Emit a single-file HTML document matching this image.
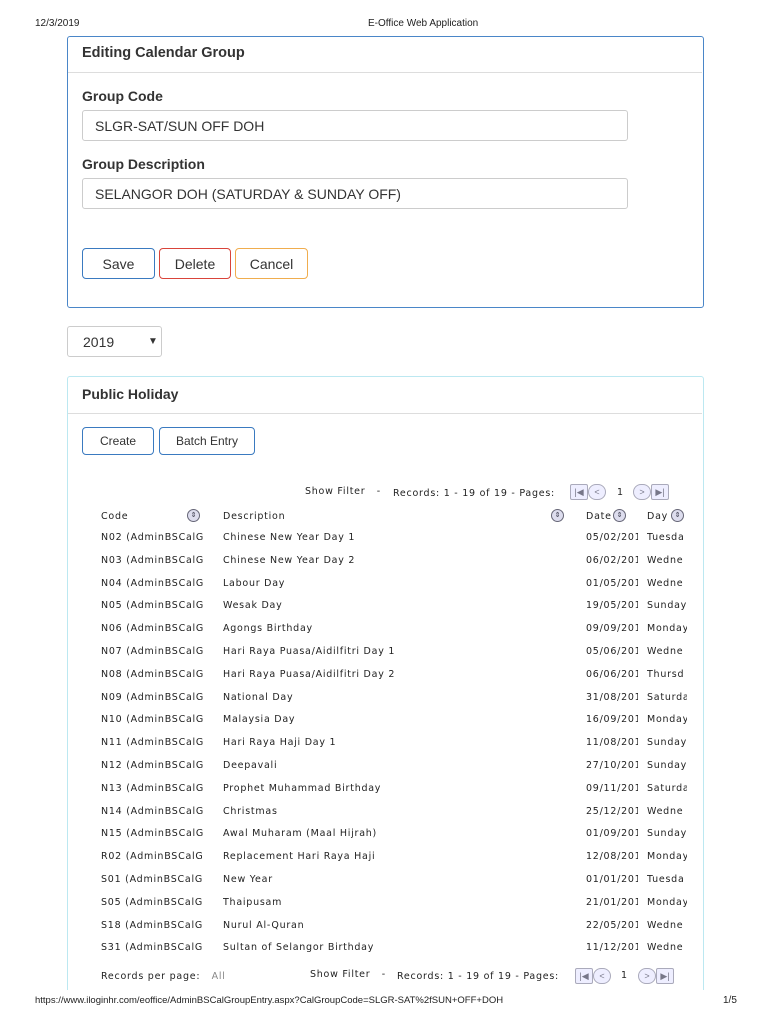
<!DOCTYPE html>
<html style="overflow:hidden"><head><style>
html,body{overflow:hidden}
body{margin:0;width:768px;height:1024px;background:#fff;font-family:"Liberation Sans",sans-serif;position:relative;color:#222}
.a{position:absolute}
.hdr{font-size:10px;color:#222}
.panel{position:absolute;border:1px solid #4a86c8;border-radius:3px}
.lbl{font-size:14px;font-weight:bold;color:#333}
.inp{position:absolute;border:1px solid #ccc;border-radius:3px;font-size:14px;padding-left:12px;box-sizing:border-box;line-height:30px;color:#333}
.btn{position:absolute;border:1px solid;border-radius:4px;font-size:14px;text-align:center;box-sizing:border-box;line-height:30px;color:#333;background:#fff}
.t{position:absolute;font-family:"DejaVu Sans",sans-serif;font-size:9.5px;letter-spacing:0.75px;color:#222;white-space:nowrap;overflow:hidden}
.s{position:absolute;width:13px;height:13px;border-radius:50%;border:1px solid #667;background:#dde;box-sizing:border-box;font-size:7px;line-height:11px;text-align:center;color:#334}
.pg{position:absolute;width:18px;height:16px;border:1px solid #aab;border-radius:8px;background:#eef;box-sizing:border-box;font-size:9px;line-height:14px;text-align:center;color:#778}
</style></head><body>
<div class="a hdr" style="left:35px;top:18px">12/3/2019</div>
<div class="a hdr" style="left:368px;top:18px">E-Office Web Application</div>

<div class="panel" style="left:67px;top:36px;width:635px;height:270px"></div>
<div class="a" style="left:68px;top:72px;width:634px;border-top:1px solid #ddd"></div>
<div class="a lbl" style="left:82px;top:45px;font-size:14.5px">Editing Calendar Group</div>
<div class="a lbl" style="left:82px;top:88px">Group Code</div>
<div class="inp" style="left:82px;top:110px;width:546px;height:31px">SLGR-SAT/SUN OFF DOH</div>
<div class="a lbl" style="left:82px;top:156px">Group Description</div>
<div class="inp" style="left:82px;top:178px;width:546px;height:31px">SELANGOR DOH (SATURDAY &amp; SUNDAY OFF)</div>
<div class="btn" style="left:82px;top:248px;width:73px;height:31px;border-color:#3a7ac0">Save</div>
<div class="btn" style="left:159px;top:248px;width:72px;height:31px;border-color:#d9443a">Delete</div>
<div class="btn" style="left:235px;top:248px;width:73px;height:31px;border-color:#f0ad4e">Cancel</div>

<div class="inp" style="left:67px;top:326px;width:95px;height:31px;padding-left:15px">2019<span style="position:absolute;left:80px;font-size:10px">▼</span></div>

<div class="panel" style="left:67px;top:376px;width:635px;height:660px;border-color:#bce8f1"></div>
<div class="a" style="left:68px;top:413px;width:634px;border-top:1px solid #ddd"></div>
<div class="a lbl" style="left:82px;top:386px">Public Holiday</div>
<div class="btn" style="left:82px;top:427px;width:72px;height:28px;line-height:26px;font-size:12px;border-color:#3a7ac0">Create</div>
<div class="btn" style="left:159px;top:427px;width:96px;height:28px;line-height:26px;font-size:12px;border-color:#3a7ac0">Batch Entry</div>

<div class="t" style="left:305px;top:486px">Show Filter &nbsp; -</div>
<div class="t" style="left:393px;top:488px">Records: 1 - 19 of 19 - Pages:</div>
<div class="pg" style="left:570px;top:484px;border-radius:2px">|◀</div><div class="pg" style="left:588px;top:484px">&lt;</div>
<div class="t" style="left:617px;top:487px">1</div>
<div class="pg" style="left:633px;top:484px">&gt;</div><div class="pg" style="left:651px;top:484px;border-radius:2px">▶|</div>

<div class="t" style="left:101px;top:511px">Code</div><div class="s" style="left:187px;top:509px">⇕</div>
<div class="t" style="left:223px;top:511px">Description</div><div class="s" style="left:551px;top:509px">⇕</div>
<div class="t" style="left:586px;top:511px">Date</div><div class="s" style="left:613px;top:509px">⇕</div>
<div class="t" style="left:647px;top:511px">Day</div><div class="s" style="left:671px;top:509px">⇕</div>

<div id="rows"></div>
<script>
var r=[["N02","Chinese New Year Day 1","05/02/","Tuesda"],["N03","Chinese New Year Day 2","06/02/","Wedne"],["N04","Labour Day","01/05/","Wedne"],["N05","Wesak Day","19/05/","Sunday"],["N06","Agongs Birthday","09/09/","Monday"],["N07","Hari Raya Puasa/Aidilfitri Day 1","05/06/","Wedne"],["N08","Hari Raya Puasa/Aidilfitri Day 2","06/06/","Thursd"],["N09","National Day","31/08/","Saturda"],["N10","Malaysia Day","16/09/","Monday"],["N11","Hari Raya Haji Day 1","11/08/","Sunday"],["N12","Deepavali","27/10/","Sunday"],["N13","Prophet Muhammad Birthday","09/11/","Saturda"],["N14","Christmas","25/12/","Wedne"],["N15","Awal Muharam (Maal Hijrah)","01/09/","Sunday"],["R02","Replacement Hari Raya Haji","12/08/","Monday"],["S01","New Year","01/01/","Tuesda"],["S05","Thaipusam","21/01/","Monday"],["S18","Nurul Al-Quran","22/05/","Wedne"],["S31","Sultan of Selangor Birthday","11/12/","Wedne"]];
var h="";r.forEach(function(x,i){var y=532+i*22.8;
h+='<div class="t" style="left:101px;top:'+y+'px;width:102px">'+x[0]+' (AdminBSCalGroup</div>';
h+='<div class="t" style="left:223px;top:'+y+'px">'+x[1]+'</div>';
h+='<div class="t" style="left:586px;top:'+y+'px;width:52px">'+x[2]+'2019</div>';
h+='<div class="t" style="left:647px;top:'+y+'px;width:40px">'+x[3]+'</div>';});
document.getElementById('rows').innerHTML=h;
</script>

<div class="t" style="left:101px;top:971px">Records per page: &nbsp;&nbsp;<span style="color:#888">All</span></div>
<div class="t" style="left:310px;top:969px">Show Filter &nbsp; -</div>
<div class="t" style="left:397px;top:971px">Records: 1 - 19 of 19 - Pages:</div>
<div class="pg" style="left:575px;top:968px;border-radius:2px">|◀</div><div class="pg" style="left:593px;top:968px">&lt;</div>
<div class="t" style="left:621px;top:970px">1</div>
<div class="pg" style="left:638px;top:968px">&gt;</div><div class="pg" style="left:656px;top:968px;border-radius:2px">▶|</div>

<div class="a" style="left:0;top:990px;width:768px;height:34px;background:#fff"></div>
<div class="a hdr" style="left:35px;top:995px;font-size:9.5px">https://www.iloginhr.com/eoffice/AdminBSCalGroupEntry.aspx?CalGroupCode=SLGR-SAT%2fSUN+OFF+DOH</div>
<div class="a hdr" style="left:723px;top:995px">1/5</div>
</body></html>
